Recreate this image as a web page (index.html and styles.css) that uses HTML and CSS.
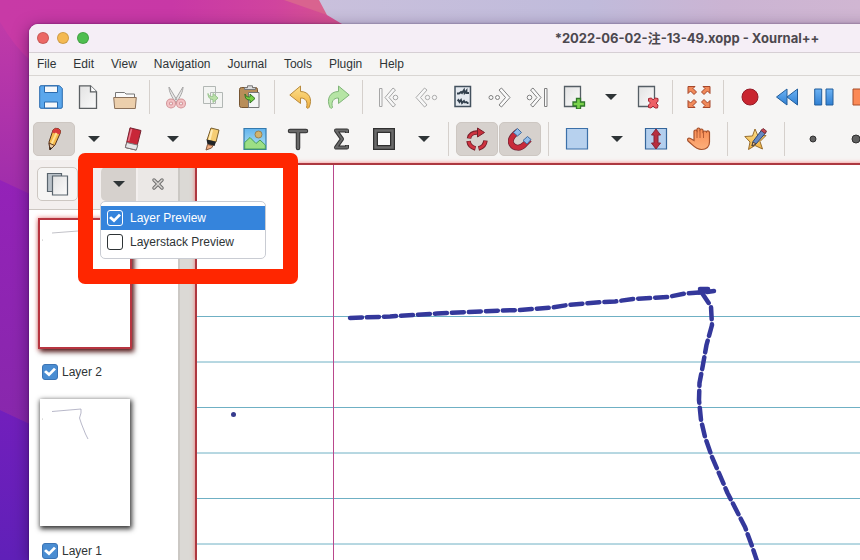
FILE: index.html
```html
<!DOCTYPE html>
<html lang="en">
<head>
<meta charset="utf-8">
<title>Xournal++</title>
<link rel="stylesheet" href="styles.css">
</head>
<body>
<svg width="0" height="0" class="defs" aria-hidden="true">
  <defs>
    <linearGradient id="paper" x1="0" y1="0" x2="1" y2="1"><stop offset="0" stop-color="#e2e2e2"/><stop offset="1" stop-color="#fbfbfb"/></linearGradient>
    <linearGradient id="blue" x1="0" y1="0" x2="0" y2="1"><stop offset="0" stop-color="#6db3f4"/><stop offset="1" stop-color="#2f7fd2"/></linearGradient>
    <linearGradient id="gold" x1="0" y1="0" x2="0" y2="1"><stop offset="0" stop-color="#fbdf8c"/><stop offset="1" stop-color="#f2b13f"/></linearGradient>
    <linearGradient id="sky" x1="0" y1="0" x2="0" y2="1"><stop offset="0" stop-color="#62b4ee"/><stop offset="1" stop-color="#b4e3ee"/></linearGradient>
    <linearGradient id="skin" x1="0" y1="0" x2="0" y2="1"><stop offset="0" stop-color="#f98b52"/><stop offset="1" stop-color="#fcb07c"/></linearGradient>
    <linearGradient id="wallTop" x1="0" y1="0" x2="1" y2="0"><stop offset="0" stop-color="#c83aa6"/><stop offset=".2" stop-color="#c838a6"/><stop offset=".32" stop-color="#d0449e"/><stop offset=".4" stop-color="#d8548f"/></linearGradient>
    <linearGradient id="wallLilac" x1="0" y1="0" x2="1" y2="0"><stop offset="0" stop-color="#c9c0dc"/><stop offset=".5" stop-color="#c0bbdb"/><stop offset=".75" stop-color="#cbb4d3"/><stop offset="1" stop-color="#d0b6d2"/></linearGradient>
    <linearGradient id="wallLeft" x1="0" y1="0" x2="0" y2="1"><stop offset="0" stop-color="#c03aa8"/><stop offset=".35" stop-color="#9c2cac"/><stop offset="1" stop-color="#9429ac"/></linearGradient>
    <linearGradient id="wallMid" x1="0" y1="0" x2="0" y2="1"><stop offset="0" stop-color="#9422b8"/><stop offset="1" stop-color="#8828ac"/></linearGradient>
    <linearGradient id="wallDeep" x1="0" y1="0" x2="0" y2="1"><stop offset="0" stop-color="#721fbc"/><stop offset="1" stop-color="#6020b8"/></linearGradient>
  </defs>
</svg>

<div class="desktop">
  <svg class="wallpaper" viewBox="0 0 860 560" preserveAspectRatio="none" aria-hidden="true">
    <rect width="860" height="560" fill="url(#wallTop)"/>
    <path d="M0 22Q14 46 30 60V560H0z" fill="url(#wallLeft)"/>
    <path d="M0 180L30 194V424L0 410z" fill="url(#wallMid)"/>
    <path d="M0 410L30 424V560H0z" fill="url(#wallDeep)"/>
    <path d="M284 0H324L330 16z" fill="#d9638f"/>
    <path d="M319 0H860V30H352L327 15z" fill="url(#wallLilac)"/>
  </svg>

  <main class="window">
    <header class="titlebar">
      <div class="lights">
        <button class="light close" aria-label="Close window"></button>
        <button class="light minimize" aria-label="Minimize window"></button>
        <button class="light maximize" aria-label="Zoom window"></button>
      </div>
      <h1>*2022-06-02-注-13-49.xopp - Xournal++</h1>
    </header>

    <nav class="menubar">
      <button>File</button><button>Edit</button><button>View</button><button>Navigation</button><button>Journal</button><button>Tools</button><button>Plugin</button><button>Help</button>
    </nav>

    <div class="toolbar first" role="toolbar" aria-label="File and page">
      <button aria-label="Save"><svg viewBox="0 0 24 24"><path d="M2 .7h18.500L23.300 3.500V22a1.300 1.300 0 0 1-1.300 1.300H2A1.300 1.300 0 0 1 .7 22V2A1.300 1.300 0 0 1 2 .7z" fill="#5aa7ec" stroke="#2a6bae"/><path d="M5.500 1h13v6.500h-13zM5.500 17h13v6h-13z" fill="#f6f8fa" stroke="#2a6bae"/></svg></button>
      <button aria-label="New"><svg viewBox="0 0 24 24"><path d="M3.500 .8h11l6 6v16.500h-17z" fill="url(#paper)" stroke="#5c6063" stroke-width="1.300"/><path d="M14.500 .8v6h6" fill="#fff" stroke="#5c6063" stroke-width="1.300"/></svg></button>
      <button aria-label="Open"><svg viewBox="0 0 24 24"><path d="M2.500 12V7.500h9L13 9h8.500v5" fill="#fafafa" stroke="#777"/><path d="M.7 12.500h22.600l-1 11H1.700z" fill="#eccfac" stroke="#8b715a"/></svg></button>
      <span class="sep"></span>
      <button aria-label="Cut"><svg viewBox="0 0 24 24" class="dim"><path d="M5 2l8.500 14-2 1.500C8 12 5 7 5 2zM19 2l-8.500 14 2 1.500C16 12 19 7 19 2z" fill="#ddd" stroke="#666"/><g fill="none" stroke="#b5444c" stroke-width="4"><circle cx="7" cy="18.500" r="3"/><circle cx="17" cy="18.500" r="3"/></g><g fill="none" stroke="#f29a9f" stroke-width="2"><circle cx="7" cy="18.500" r="3"/><circle cx="17" cy="18.500" r="3"/></g></svg></button>
      <button aria-label="Copy"><svg viewBox="0 0 24 24" class="dim"><path d="M2.500 1.500h12v17h-12zM9.500 7.500h12v15h-12z" fill="#f2f4f2" stroke="#7b8680"/><path d="M7 8.500c0 4 2 6 5 6v3l5-4.500-5-4.500v3c-2 0-4 0-5-3z" fill="#8bd06b" stroke="#4a9b3a"/></svg></button>
      <button aria-label="Paste"><svg viewBox="0 0 24 24"><rect x="1.500" y="2.500" width="18" height="20" rx="2" fill="#b88d59" stroke="#765532"/><path d="M6.500 4.500V2.700h3V.8h5v1.900h3v1.800z" fill="#ddd" stroke="#777"/><path d="M10.500 7.500h10.500v15H10.500z" fill="#f5f5f5" stroke="#777"/><path d="M7 9c0 5 2 6 5 6v3l5-4.500L12 9v3c-2 0-4 0-5-3z" fill="#77d042" stroke="#327323"/></svg></button>
      <span class="sep"></span>
      <button aria-label="Undo"><svg viewBox="0 0 24 24"><path d="M.8 10L11.500 1v5.500C20 6.500 24 14 20 22.500c-.5 1-2 1-2.500 0C19 17 17 13 11.500 13v5.500z" fill="url(#gold)" stroke="#b88a3d"/></svg></button>
      <button aria-label="Redo"><svg viewBox="0 0 24 24"><path d="M23.200 10L12.500 1v5.500C4 6.500 0 14 4 22.500c.5 1 2 1 2.500 0C5 17 7 13 12.500 13v5.500z" fill="#b6e5a5" stroke="#81b579"/></svg></button>
      <span class="sep"></span>
      <button aria-label="First page"><svg viewBox="0 0 24 24" fill="#f7f7f7" stroke="#a6a6a6"><path d="M2.500 3.500h2.500v18H2.500zM16 3l2.500 2L12 12.500l6.500 7.500-2.500 2-8-9.500z"/><circle cx="18.500" cy="12.500" r="2.300"/></svg></button>
      <button aria-label="Previous page"><svg viewBox="0 0 24 24" fill="#f7f7f7" stroke="#acacac"><path d="M10.500 3l2.500 2-6.500 7.500L13 20l-2.500 2-8.500-9.500z"/><circle cx="13.500" cy="12.500" r="2.200"/><circle cx="20.500" cy="12.500" r="2.200"/></svg></button>
      <button aria-label="Go to page"><svg viewBox="0 0 24 24"><path d="M4 1.500h15.500v20H4z" fill="#e5eaf0" stroke="#43515e" stroke-width="1.500"/><path d="M6 8.500h2l2-1.500 1 1 2-3 .5 3 2-2.500V8H18M6.500 16l1-1 1 2 1.500-2 1 3 2-2 1 1.500 1.500-.5 1 1h1" fill="none" stroke="#33414e" stroke-width="1.800"/></svg></button>
      <button aria-label="Next page"><svg viewBox="0 0 24 24" fill="#fafafa" stroke="#808080"><path d="M13.500 3L11 5l6.500 7.500L11 20l2.500 2 8.500-9.500z"/><circle cx="3" cy="12.500" r="2"/><circle cx="9.500" cy="12.500" r="2"/></svg></button>
      <button aria-label="Last page"><svg viewBox="0 0 24 24" fill="#fafafa" stroke="#808080"><path d="M19.500 3.500h2.500v18h-2.500zM8 3L5.500 5l6.500 7.500L5.500 20 8 22l8-9.500z"/><circle cx="4.500" cy="12.500" r="2.300"/></svg></button>
      <button aria-label="Insert page"><svg viewBox="0 0 24 24"><path d="M2.500 1.500h16v20h-16z" fill="url(#paper)" stroke="#555e65" stroke-width="1.300"/><path d="M14.500 13.500h4v3.500h4v4h-4v3h-4v-3h-3.500v-4h3.500z" fill="#7bd34c" stroke="#30772a" stroke-width="1.300"/></svg></button>
      <button aria-label="Page templates"><svg viewBox="0 0 24 24"><path d="M6 9h12l-6 6z" fill="#2e3436"/></svg></button>
      <button aria-label="Delete page"><svg viewBox="0 0 24 24"><path d="M2.500 1.500h16v20h-16z" fill="url(#paper)" stroke="#555e65" stroke-width="1.300"/><path d="M12.500 13.500l3-.5 1.500 2 2-2 3 .5v3l-2 1.500 2 2-.5 3h-2.500l-2-2-2 2-2.500-.5V20l2-2-2-2z" fill="#ed5f65" stroke="#a52a37"/></svg></button>
      <span class="sep"></span>
      <button aria-label="Fullscreen"><svg viewBox="0 0 24 24" fill="#f18959" stroke="#a5472b"><path id="corner" d="M1 1.500h7L6 3.500 9.500 7 7 9.500 3.500 6 1 8.500z"/><use href="#corner" transform="matrix(-1 0 0 1 24 0)"/><use href="#corner" transform="matrix(1 0 0 -1 0 24)"/><use href="#corner" transform="matrix(-1 0 0 -1 24 24)"/></svg></button>
      <span class="sep"></span>
      <button aria-label="Record"><svg viewBox="0 0 24 24"><circle cx="12" cy="12" r="8" fill="#c9252f" stroke="#951b28"/></svg></button>
      <button aria-label="Rewind"><svg viewBox="0 0 24 24"><path d="M12 4v16L1.500 12zM22.500 4v16L12 12z" fill="url(#blue)" stroke="#235e9c"/></svg></button>
      <button aria-label="Pause"><svg viewBox="0 0 24 24"><path d="M2.700 4h7v16h-7zM14 4h7v16h-7z" fill="url(#blue)" stroke="#235e9c"/></svg></button>
      <button aria-label="Stop"><svg viewBox="0 0 24 24"><path d="M4 4h17v16H4z" fill="#fb8955" stroke="#a94e2b"/></svg></button>
    </div>

    <div class="toolbar second" role="toolbar" aria-label="Drawing tools">
      <button class="on" aria-label="Pen" aria-pressed="true"><svg viewBox="0 0 24 24"><path d="M7 15L11 3q2-2.500 5-1.500t2.500 4L13 18l-5 5z" fill="#f4b94b" stroke="#5a3420"/><path d="M11 3q2-2.500 5-1.500t2.500 4l-1 2-7.500-2z" fill="#d83b3c"/><path d="M14.500 6L9.500 17" stroke="#ffe092" stroke-width="2"/><path d="M7 16l5.500 2.500-4.500 4.500z" fill="#eccba0" stroke="#5a3420"/><path d="M7.500 20l2.500 1-2 2z" fill="#222"/></svg></button>
      <button class="drop" aria-label="Pen options"><svg viewBox="0 0 24 24"><path d="M6 9h12l-6 6z" fill="#2e3436"/></svg></button>
      <button aria-label="Eraser"><svg viewBox="0 0 24 24"><path d="M9 .8l11 2.700-5 19.500-10.500-2.500z" fill="#c82638" stroke="#762432"/><path d="M5.800 15.500l11 2.600-1.500 5L4.300 20.500z" fill="#e6e6e8" stroke="#777"/><path d="M10.500 2L7.500 14" stroke="#e9788a" stroke-width="1.500"/></svg></button>
      <button class="drop" aria-label="Eraser options"><svg viewBox="0 0 24 24"><path d="M6 9h12l-6 6z" fill="#2e3436"/></svg></button>
      <button aria-label="Highlighter"><svg viewBox="0 0 24 24"><path d="M11 1l8 2-3 12-9-2z" fill="#f6cd73" stroke="#785e2d"/><path d="M12 3l-2.500 10" stroke="#ffecb7" stroke-width="2"/><path d="M6.500 12.500l9.500 2.300-1.500 4.200-7-1.500z" fill="#202326"/><path d="M7.500 17.500l5.500 1.200-1.500 2.300-5.500 2z" fill="#f2ad80" stroke="#83583d"/></svg></button>
      <button aria-label="Image"><svg viewBox="0 0 24 24"><path d="M1 1.500h22v21H1z" fill="url(#sky)" stroke="#347aae" stroke-width="1.200"/><circle cx="15.500" cy="7.500" r="3.500" fill="#d1b36d" stroke="#9a8151"/><path d="M1.700 15.500L7 10.500l6 6 4-3.500 5.300 5v4H1.700z" fill="#9cdf85" stroke="#479e59"/></svg></button>
      <button aria-label="Text"><svg viewBox="0 0 24 24"><path d="M4 4h16M12 4v17" fill="none" stroke="#333" stroke-width="4.500" stroke-linecap="round"/><path d="M4 4h16M12 4v17" fill="none" stroke="#686868" stroke-width="2.500" stroke-linecap="round"/></svg></button>
      <button aria-label="TeX"><svg viewBox="0 0 24 24"><path d="M18 6V3.500H7L13 12l-6 8.500H18V18" fill="none" stroke="#333" stroke-width="4" stroke-linejoin="round"/><path d="M18 5.500v-2H7L13 12l-6 8.500H18v-2" fill="none" stroke="#6a6a6a" stroke-width="2"/></svg></button>
      <button aria-label="Shape"><svg viewBox="0 0 24 24"><path d="M3.500 3.500h17v17h-17z" fill="#fafafa" stroke="#303030" stroke-width="5"/><path d="M3.500 3.500h17v17h-17z" fill="none" stroke="#6a6a6a" stroke-width="2.500"/></svg></button>
      <button class="drop" aria-label="Shape options"><svg viewBox="0 0 24 24"><path d="M6 9h12l-6 6z" fill="#2e3436"/></svg></button>
      <span class="sep"></span>
      <button class="on" aria-label="Rotation snapping" aria-pressed="true"><svg viewBox="0 0 24 24" fill="none"><g stroke="#761f2a" stroke-width="4.500"><path d="M4 11.500C4.500 7.500 8 5 13 5.500M3.500 14c.5 4 3 6.500 7 7.500M13.500 21.500c4-1 6.500-3.500 7-8"/></g><g stroke="#cf3340" stroke-width="2.700"><path d="M4.200 11C5 7.500 8 5.300 14 5.500M3.700 14.500c.5 3.500 3 5.700 6.300 6.600M14 21.200c3.700-1 6-3.200 6.400-7"/></g><path d="M12.500 1l7 4.500-7 4.500z" fill="#c92e3a" stroke="#761f2a"/></svg></button>
      <button class="on" aria-label="Grid snapping" aria-pressed="true"><svg viewBox="0 0 24 24"><g fill="none"><path d="M10.500 4C5 8 1 12.500 3.500 17s9 5 13 .5l5-5" stroke="#702436" stroke-width="6"/><path d="M10.500 4C5 8 1 12.500 3.500 17s9 5 13 .5l5-5" stroke="#c92b3b" stroke-width="4.500"/></g><path d="M9.500 1.500l4 4-4 3.500-4-3.500zM19.500 9.500l3.500 3-4 4.500-4-3.500z" fill="#92bce9" stroke="#416d9f"/></svg></button>
      <span class="sep"></span>
      <button aria-label="Select rectangle"><svg viewBox="0 0 24 24"><path d="M1.500 1.500h21v20.500h-21z" fill="#b7d1ee" stroke="#3b70a9" stroke-width="1.200"/></svg></button>
      <button class="drop" aria-label="Selection options"><svg viewBox="0 0 24 24"><path d="M6 9h12l-6 6z" fill="#2e3436"/></svg></button>
      <button aria-label="Vertical space"><svg viewBox="0 0 24 24"><path d="M1.500 1.500h21v20.500h-21z" fill="#b3cfee" stroke="#35669b" stroke-width="1.200"/><path d="M12 2l4.500 6H14v8h2.500L12 22l-4.500-6H10V8H7.500z" fill="#b82f40" stroke="#842536"/></svg></button>
      <button aria-label="Hand"><svg viewBox="0 0 24 24"><path d="M7 13.500V4q1.500-2 3 0V2q1.500-2 3 0v1q1.500-2 3 0v2q2-2 3.500 0l.5-1q2-.5 2.500 1.500V15c0 5-3 7.500-8 7.500-6 0-8-4-13.500-8.500-1-2 0-3.500 2.500-2.500z" fill="url(#skin)" stroke="#a6522d" stroke-width="1.200"/><path d="M10 4v7M13 3v8M16.500 5v6" fill="none" stroke="#b75c35"/></svg></button>
      <span class="sep"></span>
      <button aria-label="Default tool"><svg viewBox="0 0 24 24"><path d="M11 2l3 7 8-.5-6 6L18.500 22 11 18.500 4.500 22.500 6 15 .8 9.500 8.500 9z" fill="url(#gold)" stroke="#986e2e"/><path d="M8 19l1-4.500L18 2.500l4 3L12 17z" fill="#6588c2" stroke="#30466f"/><path d="M17 3.500l4 3L22.500 4 19 1.500z" fill="#cb4852" stroke="#7e313b"/><path d="M8 19l1-4 3 2z" fill="#e9c69a" stroke="#54412f"/></svg></button>
      <span class="sep"></span>
      <button aria-label="Very fine"><svg viewBox="0 0 24 24"><circle cx="12" cy="12" r="3" fill="#606060" stroke="#303030"/></svg></button>
      <button aria-label="Fine"><svg viewBox="0 0 24 24"><circle cx="12" cy="12" r="4" fill="#606060" stroke="#303030"/></svg></button>
    </div>

    <div class="workspace">
      <aside class="sidebar">
        <div class="sidebar-head">
          <button class="pages" aria-label="Page previews"><svg viewBox="0 0 24 24"><path d="M1.500 1.500h14v18h-14z" fill="#b9c1c8" stroke="#59646d" stroke-width="1.200"/><path d="M6.500 4h15v19h-15z" fill="url(#paper)" stroke="#59646d" stroke-width="1.200"/></svg></button>
          <div class="linked">
            <button class="down" aria-label="Preview type" aria-expanded="true"><svg viewBox="0 0 24 24"><path d="M6 9h12l-6 6z" fill="#2e3436"/></svg></button>
            <button class="shut" aria-label="Close sidebar"><svg viewBox="0 0 24 24"><path d="M8 8l8 8M16 8l-8 8" stroke="#6e6e6e" stroke-width="3.500" stroke-linecap="round"/><path d="M8 8l8 8M16 8l-8 8" stroke="#d8d5d2" stroke-width="1.500" stroke-linecap="round"/></svg></button>
            <div class="popup">
              <label><input type="checkbox" checked> Layer Preview</label>
              <label><input type="checkbox"> Layerstack Preview</label>
            </div>
            <div class="marker"></div>
          </div>
        </div>
        <div class="layers">
          <section class="layer">
            <svg class="thumb selected" viewBox="0 0 90 127"><path d="M12 13L38 11" fill="none" stroke="#a8a8b0" stroke-width=".7"/><circle cx="2.500" cy="20" r=".5" fill="#aaa"/></svg>
            <label><input type="checkbox" checked> Layer 2</label>
          </section>
          <section class="layer">
            <svg class="thumb" viewBox="0 0 90 127"><path d="M12 12.500L41 10V14L39.500 19l2 6 4 10 2.500 5" fill="none" stroke="#9a9ab2" stroke-width=".7"/><circle cx="2.500" cy="20" r=".5" fill="#aaa"/></svg>
            <label><input type="checkbox" checked> Layer 1</label>
          </section>
        </div>
      </aside>
      <div class="divider"></div>
      <div class="canvas">
        <svg class="sheet" width="100%" height="100%">
          <g stroke="#6fb0c4">
            <line x1="0" x2="100%" y1="151.500" y2="151.500"/><line x1="0" x2="100%" y1="197" y2="197"/><line x1="0" x2="100%" y1="242.500" y2="242.500"/><line x1="0" x2="100%" y1="288" y2="288"/><line x1="0" x2="100%" y1="333.500" y2="333.500"/><line x1="0" x2="100%" y1="379" y2="379"/>
          </g>
          <rect x="136" y="0" width="1" height="100%" fill="#b9488c"/>
          <circle cx="36.500" cy="249.500" r="2.500" fill="#363b8e"/>
          <g fill="none" stroke="#34389b" stroke-width="4.500" stroke-linecap="round" stroke-linejoin="round">
            <path stroke-dasharray="12 5" d="M153 153L166 152.500 193 151.500 240 148.500 305 145.500 323 145 355 142.500 371 140 404 137 418 136.500 436 134 471 132 488 128.500 502 127.500"/>
            <path d="M503 124h8M502 127.500l6-1M510 127l7-1"/>
            <path stroke-dasharray="12 5" d="M505 128L509 134 514 141.500 515 160 509.500 180 505 205 502.500 218 502 235 504 255 508 272 515 292 530.500 328 548 362 555 381 561 399"/>
          </g>
        </svg>
      </div>
    </div>
  </main>
</div>
</body>
</html>
```

FILE: styles.css
```css
* { box-sizing: border-box; }

body {
  margin: 0;
  font: 12px/16px "Liberation Sans", "Noto Sans CJK SC", sans-serif;
  color: #2e3436;
}

button {
  padding: 0;
  border: 0;
  background: none;
  font: inherit;
  color: inherit;
}

svg { display: block; }
.defs { position: absolute; }

.desktop {
  position: relative;
  display: flex;
  height: 100vh;
  padding: 24px 0 0 29px;
  overflow: hidden;
}

.wallpaper {
  position: absolute;
  inset: 0;
  width: 100%;
  height: 100%;
}

/* The window runs past the right edge of the desktop. */
.window {
  position: relative;
  display: flex;
  flex: 1 0 auto;
  flex-direction: column;
  width: 100%;
  margin-right: -485px;
  border-radius: 9px 0 0 0;
  background: #f6f5f4;
  box-shadow: 0 0 2px rgba(30, 0, 50, .5), 0 4px 16px rgba(30, 0, 50, .5);
}

.titlebar {
  display: flex;
  align-items: center;
  height: 29px;
  padding: 0 8px;
  border-bottom: 1px solid #d6cfd4;
  border-radius: 9px 0 0 0;
  background: #f5eef6;
}

.lights {
  display: flex;
  flex: 1;
  gap: 8px;
}

.light {
  width: 12px;
  height: 12px;
  border: 1px solid rgba(0, 0, 0, .15);
  border-radius: 50%;
}

.close { background: #ec6765; }
.minimize { background: #f4b952; }
.maximize { background: #4fbe50; }

.titlebar h1 {
  margin: 0;
  font: bold 13px/16px Inter, "Noto Sans CJK SC", sans-serif;
  color: #4c484e;
}

.titlebar::after {
  content: "";
  flex: 1;
}

.menubar {
  display: flex;
  gap: 17px;
  height: 23px;
  padding: 0 8px;
  border-bottom: 1px solid #d9d6d3;
}

.toolbar {
  display: flex;
  align-items: center;
  height: 42px;
}

.toolbar svg {
  width: 24px;
  height: 24px;
  margin: auto;
}

.toolbar button { flex: none; }
.first { padding-left: 3px; }
.first button { width: 37px; height: 34px; }
.second { padding-left: 4px; }

.second button {
  width: 42px;
  height: 34px;
  margin-right: 1px;
}

.second .drop { width: 35px; }

.toolbar .on {
  border: 1px solid #cdc7c2;
  border-radius: 5px;
  background: #d6d1cd;
}

.sep {
  flex: none;
  width: 1px;
  height: 34px;
  margin: 0 7px 0 6px;
  background: #d5d0cc;
}

.dim { opacity: .55; }

.workspace {
  display: flex;
  flex: 1;
  min-height: 0;
}

.sidebar {
  display: flex;
  flex: none;
  flex-direction: column;
  width: 149px;
  background: #fff;
}

.sidebar-head {
  display: flex;
  gap: 23px;
  height: 50px;
  padding: 7px 0 8px 8px;
  border-bottom: 1px solid #cdc7c2;
  background: #f3efee;
}

.sidebar-head svg {
  width: 24px;
  height: 24px;
  margin: auto;
}

.pages {
  width: 41px;
  border: 1px solid #cdc7c2;
  border-radius: 5px;
  background: #f6f5f4;
}

.linked {
  position: relative;
  display: flex;
  flex: 1;
  gap: 2px;
}

.down {
  width: 35px;
  border-radius: 5px 0 0 5px;
  background: #d6d1cd;
}

.shut {
  flex: 1;
  background: #ebe8e6;
}

.popup {
  position: absolute;
  z-index: 2;
  top: 34px;
  left: -1px;
  width: 166px;
  padding: 4px 0;
  border: 1px solid #c9ccd3;
  border-radius: 5px;
  background: #fff;
}

.popup label,
.layer label {
  display: flex;
  align-items: center;
  white-space: nowrap;
}

.popup label {
  gap: 7px;
  height: 24px;
  padding-left: 6px;
}

.popup label:first-child {
  background: #3584dc;
  color: #fff;
}

input {
  appearance: none;
  display: grid;
  width: 16px;
  height: 16px;
  margin: 0;
  border: 1px solid currentColor;
  border-radius: 3px;
  color: inherit;
}

input:checked::before {
  content: "";
  width: 12px;
  height: 10px;
  margin: auto;
  background: #fff;
  clip-path: polygon(0 50%, 17% 33%, 42% 58%, 83% 8%, 100% 25%, 42% 96%);
}

/* Highlight drawn round the preview type menu. */
.marker {
  position: absolute;
  z-index: 3;
  top: -14px;
  left: -23px;
  width: 220px;
  height: 131px;
  border: 15px solid #ff2600;
  border-radius: 7px;
  pointer-events: none;
}

.layers {
  flex: 1;
  min-height: 0;
  padding: 10px 11px;
  overflow: hidden;
}

.layer {
  height: 179px;
}

.thumb {
  width: 90px;
  height: 127px;
  margin-bottom: 17px;
  background: #fff;
  box-shadow: 1px 2px 5px 1px rgba(0, 0, 0, .8);
}

.thumb.selected {
  outline: 2px solid #b73540;
  box-shadow: 2px 3px 5px 2px rgba(50, 0, 0, .85), 0 0 4px 3px rgba(255, 70, 70, .4);
}

.layer label {
  gap: 4px;
  padding-left: 2px;
}

.layer input {
  border-color: #3c74b4;
  background: #4a8dd2;
}

.divider {
  flex: none;
  width: 17px;
  border-left: 2px solid #cbc8c4;
  background: #dbd9d5;
}

.canvas {
  flex: 1;
  min-width: 0;
  margin-top: 3px;
  border: solid #ad3840;
  border-width: 2px 0 0 2px;
  background: #fff;
  box-shadow: 0 0 4px rgba(255, 50, 50, .6);
}
```
